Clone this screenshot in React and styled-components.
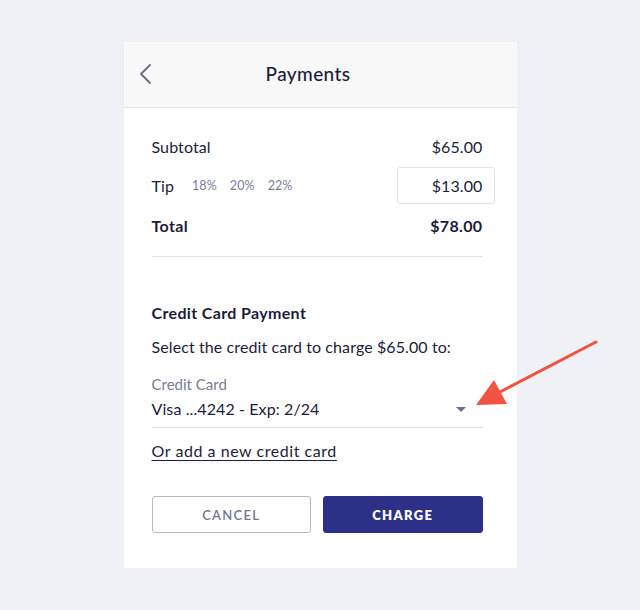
import React from "react"
import styled, { createGlobalStyle } from "styled-components"

const GlobalStyle = createGlobalStyle`
  * {
    margin: 0;
    padding: 0;
    box-sizing: border-box;
  }
  body {
    background-color: #f0f1f6;
    font-family: "Lato", "Liberation Sans", sans-serif;
    color: #1c1c3a;
  }
`

const Page = styled.div`
  position: relative;
  width: 640px;
  height: 610px;
  padding-top: 42px;
  display: flex;
  justify-content: center;
  align-items: flex-start;
`

const Card = styled.div`
  width: 393px;
  background: #ffffff;
  display: flex;
  flex-direction: column;
`

const Header = styled.div`
  height: 66px;
  background: #f8f8f8;
  border-bottom: 1px solid #e6e6ea;
  display: flex;
  align-items: center;
  justify-content: center;
  position: relative;
`

const Back = styled.button`
  position: absolute;
  left: 14px;
  top: 21px;
  border: none;
  background: none;
  display: flex;
`

const Title = styled.h1`
  font-size: 19px;
  font-weight: 500;
  letter-spacing: 0.4px;
  color: #1c1c3a;
  margin-left: -24px;
  margin-top: -2px;
`

const Body = styled.div`
  padding: 29px 34px 35px 28px;
  display: flex;
  flex-direction: column;
`

const Row = styled.div`
  display: flex;
  align-items: center;
  justify-content: space-between;
  font-size: 16px;
  line-height: 20px;
  letter-spacing: ${p => (p.$bold ? 0.35 : 0.1)}px;
  font-weight: ${p => (p.$bold ? 700 : 400)};
  margin-top: ${p => p.$mt || 0}px;
`

const TipLabel = styled.div`
  display: flex;
  align-items: center;
  gap: 18px;
`

const Percents = styled.div`
  display: flex;
  gap: 13px;
`

const Percent = styled.span`
  font-size: 12.5px;
  color: #7b7b96;
`

const TipInput = styled.div`
  width: 98px;
  height: 37px;
  margin-right: -12px;
  border: 1px solid #e2e2e8;
  border-radius: 3px;
  display: flex;
  align-items: center;
  justify-content: flex-end;
  padding-right: 11px;
`

const Divider = styled.div`
  height: 1px;
  background: #e2e2e8;
  margin-top: 20px;
`

const SectionTitle = styled.h2`
  margin-top: 46px;
  font-size: 16px;
  line-height: 20px;
  letter-spacing: 0.35px;
  font-weight: 700;
`

const Text = styled.p`
  margin-top: 14px;
  font-size: 16px;
  line-height: 20px;
  letter-spacing: 0.1px;
`

const Select = styled.div`
  margin-top: 18px;
  border-bottom: 1px solid #e2e2e8;
  padding-bottom: 8px;
`

const SelectLabel = styled.div`
  font-size: 15px;
  line-height: 18px;
  color: #7b7b96;
  margin-bottom: 6px;
`

const SelectValue = styled.div`
  font-size: 16px;
  line-height: 20px;
  letter-spacing: 0.1px;
  display: flex;
  justify-content: space-between;
  align-items: center;
  padding-right: 17px;
`

const Caret = styled.span`
  width: 0;
  height: 0;
  border-left: 5px solid transparent;
  border-right: 5px solid transparent;
  border-top: 5px solid #6e6e88;
`

const AddLink = styled.a`
  margin-top: 13px;
  font-size: 16px;
  line-height: 20px;
  letter-spacing: 0.55px;
  color: #1c1c3a;
  text-decoration: underline;
  text-underline-offset: 3px;
  align-self: flex-start;
`

const Buttons = styled.div`
  margin-top: 35px;
  display: grid;
  grid-template-columns: 1fr 1fr;
  gap: 12px;
`

const Button = styled.button`
  height: 37px;
  border-radius: 3px;
  font-family: inherit;
  font-size: 13px;
  font-weight: ${p => (p.$primary ? 800 : 600)};
  letter-spacing: 1.3px;
  border: 1px solid ${p => (p.$primary ? "#2d3087" : "#b9b9c9")};
  background: ${p => (p.$primary ? "#2d3087" : "#ffffff")};
  color: ${p => (p.$primary ? "#ffffff" : "#75758f")};
`

const Arrow = styled.svg`
  position: absolute;
  left: 0;
  top: 0;
  pointer-events: none;
`

export default function App() {
  return (
    <>
      <GlobalStyle />
      <Page>
        <Card>
          <Header>
            <Back aria-label="back">
              <svg width="16" height="22" viewBox="0 0 16 22">
                <path d="M12 2 L3 11 L12 20" fill="none" stroke="#6b6b85" strokeWidth="1.8" strokeLinecap="round" strokeLinejoin="round" />
              </svg>
            </Back>
            <Title>Payments</Title>
          </Header>
          <Body>
            <Row>
              <span>Subtotal</span>
              <span>$65.00</span>
            </Row>
            <Row $mt={10}>
              <TipLabel>
                <span>Tip</span>
                <Percents>
                  <Percent>18%</Percent>
                  <Percent>20%</Percent>
                  <Percent>22%</Percent>
                </Percents>
              </TipLabel>
              <TipInput>$13.00</TipInput>
            </Row>
            <Row $bold $mt={12}>
              <span>Total</span>
              <span>$78.00</span>
            </Row>
            <Divider />
            <SectionTitle>Credit Card Payment</SectionTitle>
            <Text>Select the credit card to charge $65.00 to:</Text>
            <Select>
              <SelectLabel>Credit Card</SelectLabel>
              <SelectValue>
                <span>Visa ...4242 - Exp: 2/24</span>
                <Caret />
              </SelectValue>
            </Select>
            <AddLink href="#">Or add a new credit card</AddLink>
            <Buttons>
              <Button>CANCEL</Button>
              <Button $primary>CHARGE</Button>
            </Buttons>
          </Body>
        </Card>
        <Arrow width="640" height="610" viewBox="0 0 640 610">
          <line x1="596" y1="342" x2="496" y2="394" stroke="#ef5442" strokeWidth="3" strokeLinecap="round" />
          <polygon points="476,405 494,380 507,404" fill="#ef5442" />
        </Arrow>
      </Page>
    </>
  )
}
